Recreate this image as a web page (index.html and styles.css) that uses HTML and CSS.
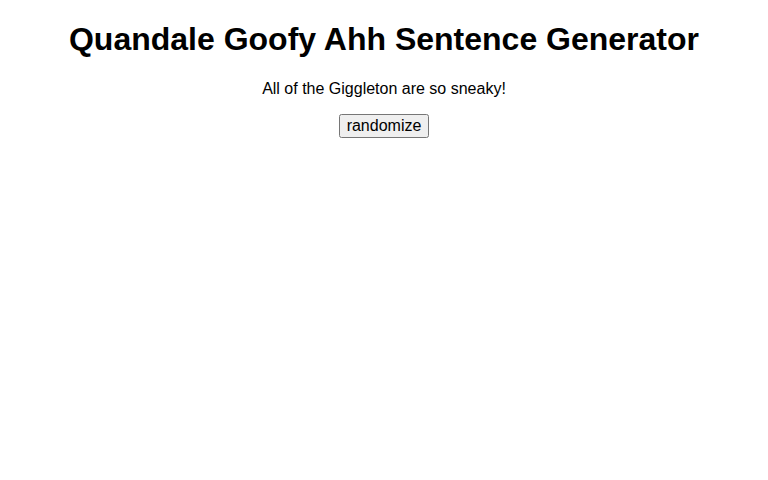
FILE: index.html
```html
<!DOCTYPE html>
<html lang="en">
<head>
  <meta charset="UTF-8">
  <title>Quandale Goofy Ahh Sentence Generator</title>
  <link rel="stylesheet" href="styles.css">
</head>
<body>

  <h1>Quandale Goofy Ahh Sentence Generator</h1>

  <p id="sentence">All of the Giggleton are so sneaky!</p>

  <button onclick="randomize()">randomize</button>

  <script>
    const kata = ["Giggleton", "Quandale", "Dingle", "Goofy Ahh", "Bingus"];
    const sifat = ["sneaky", "goofy", "silly", "sus", "funky"];

    function pilih(arr) {
      return arr[Math.floor(Math.random() * arr.length)];
    }

    function randomize() {
      document.getElementById("sentence").textContent =
        `All of the ${pilih(kata)} are so ${pilih(sifat)}!`;
    }
  </script>

</body>
</html>
```

FILE: styles.css
```css
body {
  font-family: "Liberation Sans", Arial, sans-serif;
  text-align: center;
  margin: 0;
}
button {
  font-family: "Liberation Sans", Arial, sans-serif;
  font-size: 16px;
}
```
